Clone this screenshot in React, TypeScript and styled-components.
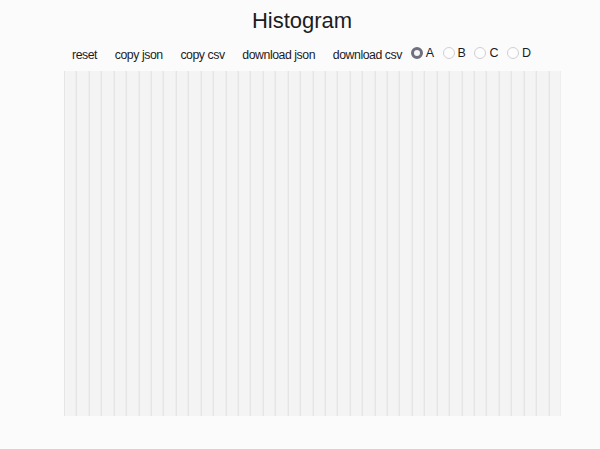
import { useState } from "react";
import styled, { createGlobalStyle } from "styled-components";

const GlobalStyle = createGlobalStyle`
  html, body {
    margin: 0;
    padding: 0;
    background: #fcfbfc;
    font-family: "Liberation Sans", Arial, sans-serif;
    color: #1c1c1e;
  }
`;

const BIN_COUNT = 40;
const SERIES = ["A", "B", "C", "D"];

const Page = styled.div`
  width: 600px;
  height: 449px;
  display: flex;
  flex-direction: column;
`;

const Title = styled.h1`
  margin: 8px 0 0;
  text-align: center;
  font-size: 22px;
  font-weight: 400;
  line-height: 26px;
  padding-left: 4px;
`;

const Body = styled.main`
  margin: 9px 0 0 64px;
  width: 497px;
  display: flex;
  flex-direction: column;
`;

const Toolbar = styled.div`
  display: flex;
  align-items: center;
  height: 24px;
`;

const ActionButton = styled.button`
  border: 0;
  background: transparent;
  font-family: inherit;
  font-size: 12.3px;
  letter-spacing: -0.45px;
  color: #1c1c1e;
  padding: 0 8.85px;
  height: 24px;
  cursor: pointer;
  &:first-child {
    padding-left: 8px;
  }
`;

const RadioLabel = styled.label<{ $first: boolean }>`
  display: flex;
  align-items: center;
  gap: 3px;
  font-size: 12.5px;
  margin: -4px 0 0 ${(p) => (p.$first ? "0" : "8.5px")};
  cursor: pointer;
`;

const RadioDot = styled.span<{ $checked: boolean }>`
  width: 12px;
  height: 12px;
  border-radius: 50%;
  box-sizing: border-box;
  border: ${(p) => (p.$checked ? "3.5px solid #6f6f7d" : "1px solid #cfcfd3")};
  background: ${(p) => (p.$checked ? "#f6f6f8" : "#fdfdfd")};
`;

const Chart = styled.div`
  margin-top: 4px;
  height: 345px;
  display: grid;
  grid-template-columns: repeat(${BIN_COUNT}, 1fr);
  background: #f4f3f4;
`;

const Bin = styled.div`
  border-left: 1px solid #e6e5e6;
  border-right: 1px solid #efeeef;
  background: #f5f4f5;
`;

export default function App() {
  const [series, setSeries] = useState("A");
  const bins = Array.from({ length: BIN_COUNT }, (_, i) => i);

  return (
    <Page>
      <GlobalStyle />
      <Title>Histogram</Title>
      <Body>
        <Toolbar>
          <ActionButton>reset</ActionButton>
          <ActionButton>copy json</ActionButton>
          <ActionButton>copy csv</ActionButton>
          <ActionButton>download json</ActionButton>
          <ActionButton>download csv</ActionButton>
          {SERIES.map((s, i) => (
            <RadioLabel key={s} $first={i === 0} onClick={() => setSeries(s)}>
              <RadioDot $checked={series === s} />
              {s}
            </RadioLabel>
          ))}
        </Toolbar>
        <Chart>
          {bins.map((b) => (
            <Bin key={b} />
          ))}
        </Chart>
      </Body>
    </Page>
  );
}
